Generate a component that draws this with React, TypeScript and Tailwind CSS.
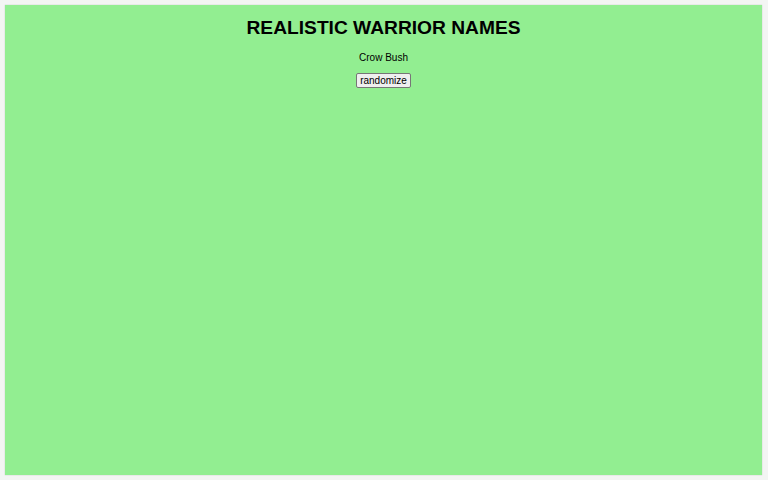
import { useState } from 'react'

const prefixes = ['Crow', 'Bramble', 'Fern', 'Stone', 'Ash', 'Moss', 'Thistle', 'Hawk']
const suffixes = ['Bush', 'Tail', 'Pelt', 'Claw', 'Heart', 'Stripe', 'Whisker', 'Fur']

export default function App() {
  const [name, setName] = useState('Crow Bush')

  const randomize = () => {
    const a = prefixes[Math.floor(Math.random() * prefixes.length)]
    const b = suffixes[Math.floor(Math.random() * suffixes.length)]
    setName(`${a} ${b}`)
  }

  return (
    <div className="h-[480px] w-[768px] bg-[#f3f5f3] p-[5px] font-['Liberation_Sans',Arial,sans-serif]">
      <div className="flex h-[470px] w-[757px] flex-col items-center bg-[#92ee91] shadow-[0_0_1px_rgba(0,0,0,0.25)]">
        <h1 className="mt-[12px] text-[19.2px] font-bold leading-[22px] text-black">REALISTIC WARRIOR NAMES</h1>
        <p className="mt-[13px] text-[10px] leading-[12px] text-black">{name}</p>
        <button
          onClick={randomize}
          className="mt-[9px] h-[15px] rounded-[2px] border border-[#767676] bg-[#efefef] px-[3px] text-[10px] leading-[12px] text-black"
        >
          randomize
        </button>
      </div>
    </div>
  )
}
